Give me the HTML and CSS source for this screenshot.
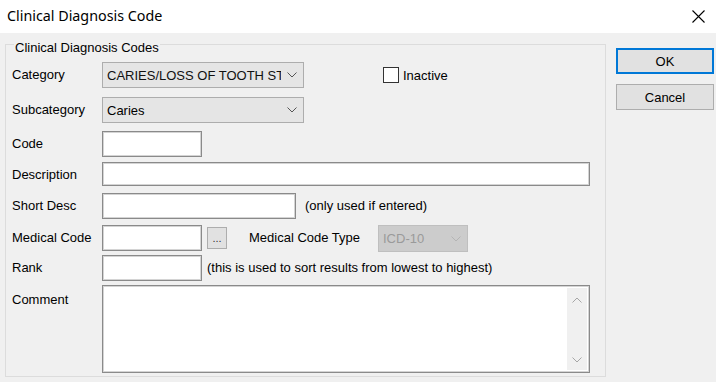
FILE: index.html
```html
<!DOCTYPE html>
<html>
<head>
<meta charset="utf-8">
<link rel="stylesheet" href="styles.css">
</head>
<body>
<div class="window">
  <div class="titlebar">
    <span class="title">Clinical Diagnosis Code</span>
    <svg class="close" width="13" height="13" viewBox="0 0 13 13"><path d="M0.5 0.5 L12.5 12.5 M12.5 0.5 L0.5 12.5" stroke="#000" stroke-width="1.1" fill="none"/></svg>
  </div>
  <div class="content">
    <div class="groupbox">
      <div class="legend">Clinical Diagnosis Codes</div>
      <div class="rows">
        <div class="row r1">
          <span class="lbl">Category</span>
          <div class="combo w202"><span class="ctext">CARIES/LOSS OF TOOTH STRUCTURE</span><svg class="chev" width="10" height="6" viewBox="0 0 10 6"><path d="M0.5 0.5 L5 5 L9.5 0.5" stroke="#555" fill="none"/></svg></div>
          <div class="check"><span class="box"></span><span>Inactive</span></div>
        </div>
        <div class="row r2">
          <span class="lbl">Subcategory</span>
          <div class="combo w202"><span class="ctext">Caries</span><svg class="chev" width="10" height="6" viewBox="0 0 10 6"><path d="M0.5 0.5 L5 5 L9.5 0.5" stroke="#555" fill="none"/></svg></div>
        </div>
        <div class="row r3">
          <span class="lbl">Code</span>
          <div class="tb w100"></div>
        </div>
        <div class="row r4">
          <span class="lbl">Description</span>
          <div class="tb wfull h24"></div>
        </div>
        <div class="row r5">
          <span class="lbl">Short Desc</span>
          <div class="tb w194"></div>
          <span class="note n1">(only used if entered)</span>
        </div>
        <div class="row r6">
          <span class="lbl">Medical Code</span>
          <div class="tb w100"></div>
          <div class="dots">...</div>
          <span class="lbl2">Medical Code Type</span>
          <div class="combo disabled w90"><span class="ctext">ICD-10</span><svg class="chev" width="10" height="6" viewBox="0 0 10 6"><path d="M0.5 0.5 L5 5 L9.5 0.5" stroke="#b4b4b4" fill="none"/></svg></div>
        </div>
        <div class="row r7">
          <span class="lbl">Rank</span>
          <div class="tb w100"></div>
          <span class="note n2">(this is used to sort results from lowest to highest)</span>
        </div>
        <div class="row r8">
          <span class="lbl top">Comment</span>
          <div class="memo">
            <div class="scroll">
              <svg width="10" height="6" viewBox="0 0 10 6"><path d="M0.5 5.5 L5 1 L9.5 5.5" stroke="#a6a6a6" fill="none"/></svg>
              <svg width="10" height="6" viewBox="0 0 10 6"><path d="M0.5 0.5 L5 5 L9.5 0.5" stroke="#a6a6a6" fill="none"/></svg>
            </div>
          </div>
        </div>
      </div>
    </div>
    <div class="buttons">
      <div class="btn ok">OK</div>
      <div class="btn">Cancel</div>
    </div>
  </div>
</div>
</body>
</html>
```
FILE: styles.css
```css
html, body {
  margin: 0;
  padding: 0;
}
body {
  width: 716px;
  height: 382px;
  background: #f0f0f0;
  font-family: "Liberation Sans", Arial, sans-serif;
  font-size: 13px;
  color: #000;
  overflow: hidden;
}
.titlebar {
  height: 33px;
  background: #fff;
  display: flex;
  align-items: center;
  justify-content: space-between;
  padding: 0 11px 0 7px;
}
.title {
  font-family: "Noto Sans", "Open Sans", sans-serif;
  font-size: 14.3px;
  color: #000;
  margin-top: -2px;
}
.close {
  margin-top: -1px;
}
.content {
  display: flex;
  align-items: flex-start;
  padding: 11px 0 0 5px;
}
.groupbox {
  width: 593px;
  height: 331px;
  border: 1px solid #dcdcdc;
  padding: 0 0 0 6px;
  box-sizing: content-box;
}
.legend {
  width: fit-content;
  margin: -5px 0 0 2px;
  padding: 0 1px;
  line-height: 15px;
  background: #f0f0f0;
}
.rows {
  margin-top: 7px;
  display: flex;
  flex-direction: column;
}
.row {
  display: flex;
  align-items: flex-start;
}
.r1 { height: 35px; }
.r2 { height: 34px; }
.r3 { height: 31px; }
.r4 { height: 31px; }
.r5 { height: 32px; }
.r6 { height: 30px; }
.r7 { height: 30px; }
.r8 { height: 87px; }
.lbl {
  width: 90px;
  flex: none;
  line-height: 26px;
}
.lbl.top {
  line-height: 15px;
  padding-top: 7px;
}
.combo {
  height: 26px;
  box-sizing: border-box;
  background: #e5e5e5;
  border: 1px solid #adadad;
  display: flex;
  align-items: center;
  padding: 0 6px 0 4px;
}
.ctext {
  flex: 1;
  white-space: nowrap;
  overflow: hidden;
}
.r1 .ctext {
  color: #111;
}
.chev {
  flex: none;
  margin-left: 6px;
}
.combo.disabled {
  background: #cccccc;
  border-color: #bfbfbf;
  color: #9a9a9a;
  height: 27px;
}
.w202 { width: 202px; }
.w100 { width: 100px; }
.w194 { width: 194px; }
.w90 { width: 90px; }
.wfull { width: 488px; }
.tb {
  height: 26px;
  box-sizing: border-box;
  background: #fff;
  border: 1px solid #8a8a8a;
  box-shadow: inset 0 0 0 1px #d4d4d4;
}
.tb.h24 { height: 24px; }
.check {
  display: flex;
  align-items: center;
  gap: 4px;
  margin-left: 79px;
  height: 26px;
}
.box {
  width: 16px;
  height: 16px;
  box-sizing: border-box;
  border: 1px solid #333;
  background: #fff;
}
.note {
  line-height: 26px;
}
.n1 { margin-left: 9px; }
.n2 { margin-left: 5px; }
.dots {
  width: 20px;
  height: 22px;
  margin: 2px 0 0 5px;
  box-sizing: border-box;
  background: #e1e1e1;
  border: 1px solid #adadad;
  font-size: 11px;
  line-height: 20px;
  text-align: center;
  color: #333;
}
.lbl2 {
  margin-left: 22px;
  line-height: 26px;
  width: 129px;
}
.memo {
  width: 488px;
  height: 88px;
  box-sizing: border-box;
  background: #fff;
  border: 1px solid #8a8a8a;
  box-shadow: inset 0 0 0 1px #d4d4d4;
  display: flex;
  justify-content: flex-end;
  padding: 2px;
}
.scroll {
  width: 20px;
  background: #f0f0f0;
  display: flex;
  flex-direction: column;
  align-items: center;
  justify-content: space-between;
  padding: 9px 0 7px;
  box-sizing: border-box;
}
.buttons {
  margin-left: 10px;
  margin-top: 4px;
  display: flex;
  flex-direction: column;
  gap: 10px;
}
.btn {
  width: 98px;
  height: 26px;
  box-sizing: border-box;
  background: #e1e1e1;
  border: 1px solid #adadad;
  display: flex;
  align-items: center;
  justify-content: center;
}
.btn.ok {
  border: 2px solid #0078d7;
}
```
